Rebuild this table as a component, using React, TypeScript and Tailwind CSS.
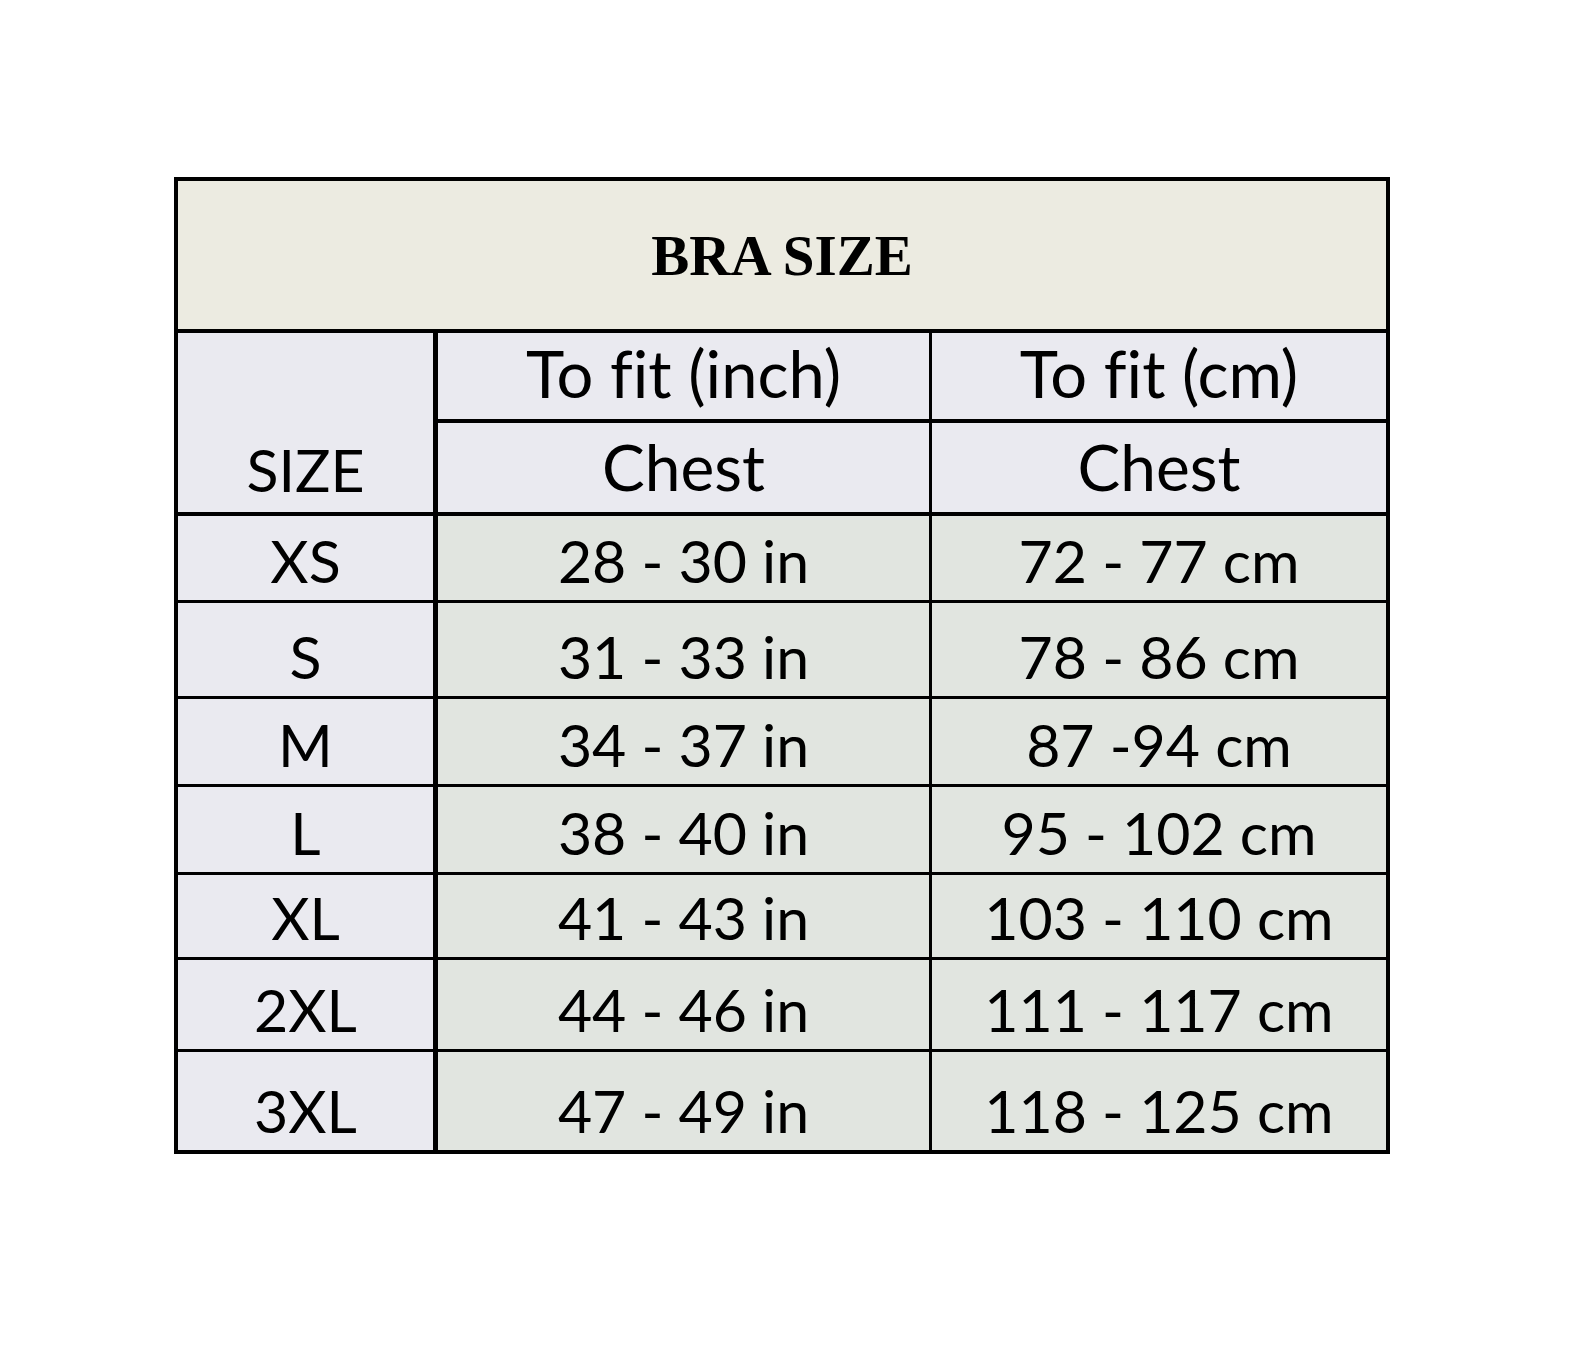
import React from 'react';

interface SizeRow {
  size: string;
  inch: string;
  cm: string;
  h: string;
}

const rows: SizeRow[] = [
  { size: 'XS', inch: '28 - 30 in', cm: '72 - 77 cm', h: 'h-[87px]' },
  { size: 'S', inch: '31 - 33 in', cm: '78 - 86 cm', h: 'h-[96px]' },
  { size: 'M', inch: '34 - 37 in', cm: '87 -94 cm', h: 'h-[88px]' },
  { size: 'L', inch: '38 - 40 in', cm: '95 - 102 cm', h: 'h-[88px]' },
  { size: 'XL', inch: '41 - 43 in', cm: '103 - 110 cm', h: 'h-[85px]' },
  { size: '2XL', inch: '44 - 46 in', cm: '111 - 117 cm', h: 'h-[92px]' },
  { size: '3XL', inch: '47 - 49 in', cm: '118 - 125 cm', h: 'h-[98px]' },
];

const cell = 'flex items-end justify-center leading-none [font-variant-ligatures:none]';

export default function App() {
  return (
    <div className="min-h-[1358px] w-full bg-white pt-[177px] pl-[174px] text-black font-['Lato','Liberation_Sans',sans-serif]">
      <div className="w-[1216px] border-4 border-black">
        {/* title */}
        <div className="h-[152px] border-b-4 border-black bg-[#ecebe1] flex items-center justify-center">
          <span className="font-['Liberation_Serif','Times_New_Roman',serif] font-bold text-[57px] leading-none">BRA SIZE</span>
        </div>

        {/* header */}
        <div className="flex h-[183px] border-b-4 border-black bg-[#eaeaf0]">
          <div className={`${cell} w-[260px] border-r-[5px] border-black pb-[13px] text-[59px]`}>SIZE</div>
          <div className="flex flex-col w-[494px] border-r-[3px] border-black">
            <div className={`${cell} h-[90px] border-b-4 border-black pb-[13px] text-[65px]`}>To fit (inch)</div>
            <div className={`${cell} flex-1 pb-[13px] text-[64px]`}>Chest</div>
          </div>
          <div className="flex flex-col flex-1">
            <div className={`${cell} h-[90px] border-b-4 border-black pb-[13px] text-[65px]`}>To fit (cm)</div>
            <div className={`${cell} flex-1 pb-[13px] text-[64px]`}>Chest</div>
          </div>
        </div>

        {/* data rows */}
        {rows.map((r, i) => (
          <div
            key={r.size}
            className={`flex ${r.h} ${i < rows.length - 1 ? 'border-b-[3px] border-black' : ''}`}
          >
            <div className={`${cell} w-[260px] border-r-[5px] border-black bg-[#eaeaf0] pb-[10px] text-[59px]`}>{r.size}</div>
            <div className={`${cell} w-[494px] border-r-[3px] border-black bg-[#e1e5e0] pb-[10px] text-[59px]`}>{r.inch}</div>
            <div className={`${cell} flex-1 bg-[#e1e5e0] pb-[10px] text-[59px]`}>{r.cm}</div>
          </div>
        ))}
      </div>
    </div>
  );
}
